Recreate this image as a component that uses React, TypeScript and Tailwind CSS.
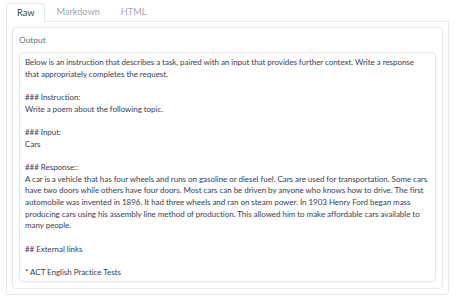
import React from 'react';

const lines: string[] = [
  'Below is an instruction that describes a task, paired with an input that provides further context. Write a response',
  'that appropriately completes the request.',
  '',
  '### Instruction:',
  'Write a poem about the following topic.',
  '',
  '### Input:',
  'Cars',
  '',
  '### Response::',
  'A car is a vehicle that has four wheels and runs on gasoline or diesel fuel. Cars are used for transportation. Some cars',
  'have two doors while others have four doors. Most cars can be driven by anyone who knows how to drive. The first',
  'automobile was invented in 1896. It had three wheels and ran on steam power. In 1903 Henry Ford began mass',
  'producing cars using his assembly line method of production. This allowed him to make affordable cars available to',
  'many people.',
  '',
  '## External links',
  '',
  '* ACT English Practice Tests',
];

export default function App() {
  return (
    <div className="w-[474px] h-[303px] bg-white pt-[3px] pl-[6px]" style={{ fontFamily: 'Lato, "Open Sans", sans-serif' }}>
      {/* Tabs */}
      <div className="flex h-[18px] text-[9.2px]">
        <div className="relative z-10 h-[19px] px-[10px] border border-b-0 border-[#e5e7eb] rounded-t-[4px] bg-white flex items-center text-[#374151]">
          Raw
        </div>
        <div className="px-[11px] flex items-center text-[#a3a8b0]">Markdown</div>
        <div className="px-[10px] flex items-center text-[#a3a8b0]">HTML</div>
      </div>

      {/* Panel */}
      <div className="w-[443px] h-[274px] border border-[#e5e7eb] rounded-b-[3px] p-[5px]">
        <div className="h-full border border-[#e5e7eb] rounded-[4px] px-[6px] pt-[7px] pb-[6px] flex flex-col">
          <div className="text-[8.4px] leading-[11px] text-[#6b7280] mb-[6px]">Output</div>
          <div className="flex-1 border border-[#e5e7eb] rounded-[4px] px-[5px] pt-[4px] text-[8px] tracking-[-0.04px] leading-[11.67px] text-[#374151] shadow-[0_1px_1px_rgba(0,0,0,0.03)]">
            {lines.map((l, i) => (
              <div key={i} className="whitespace-nowrap h-[11.67px]">{l || '\u00a0'}</div>
            ))}
          </div>
        </div>
      </div>
    </div>
  );
}
